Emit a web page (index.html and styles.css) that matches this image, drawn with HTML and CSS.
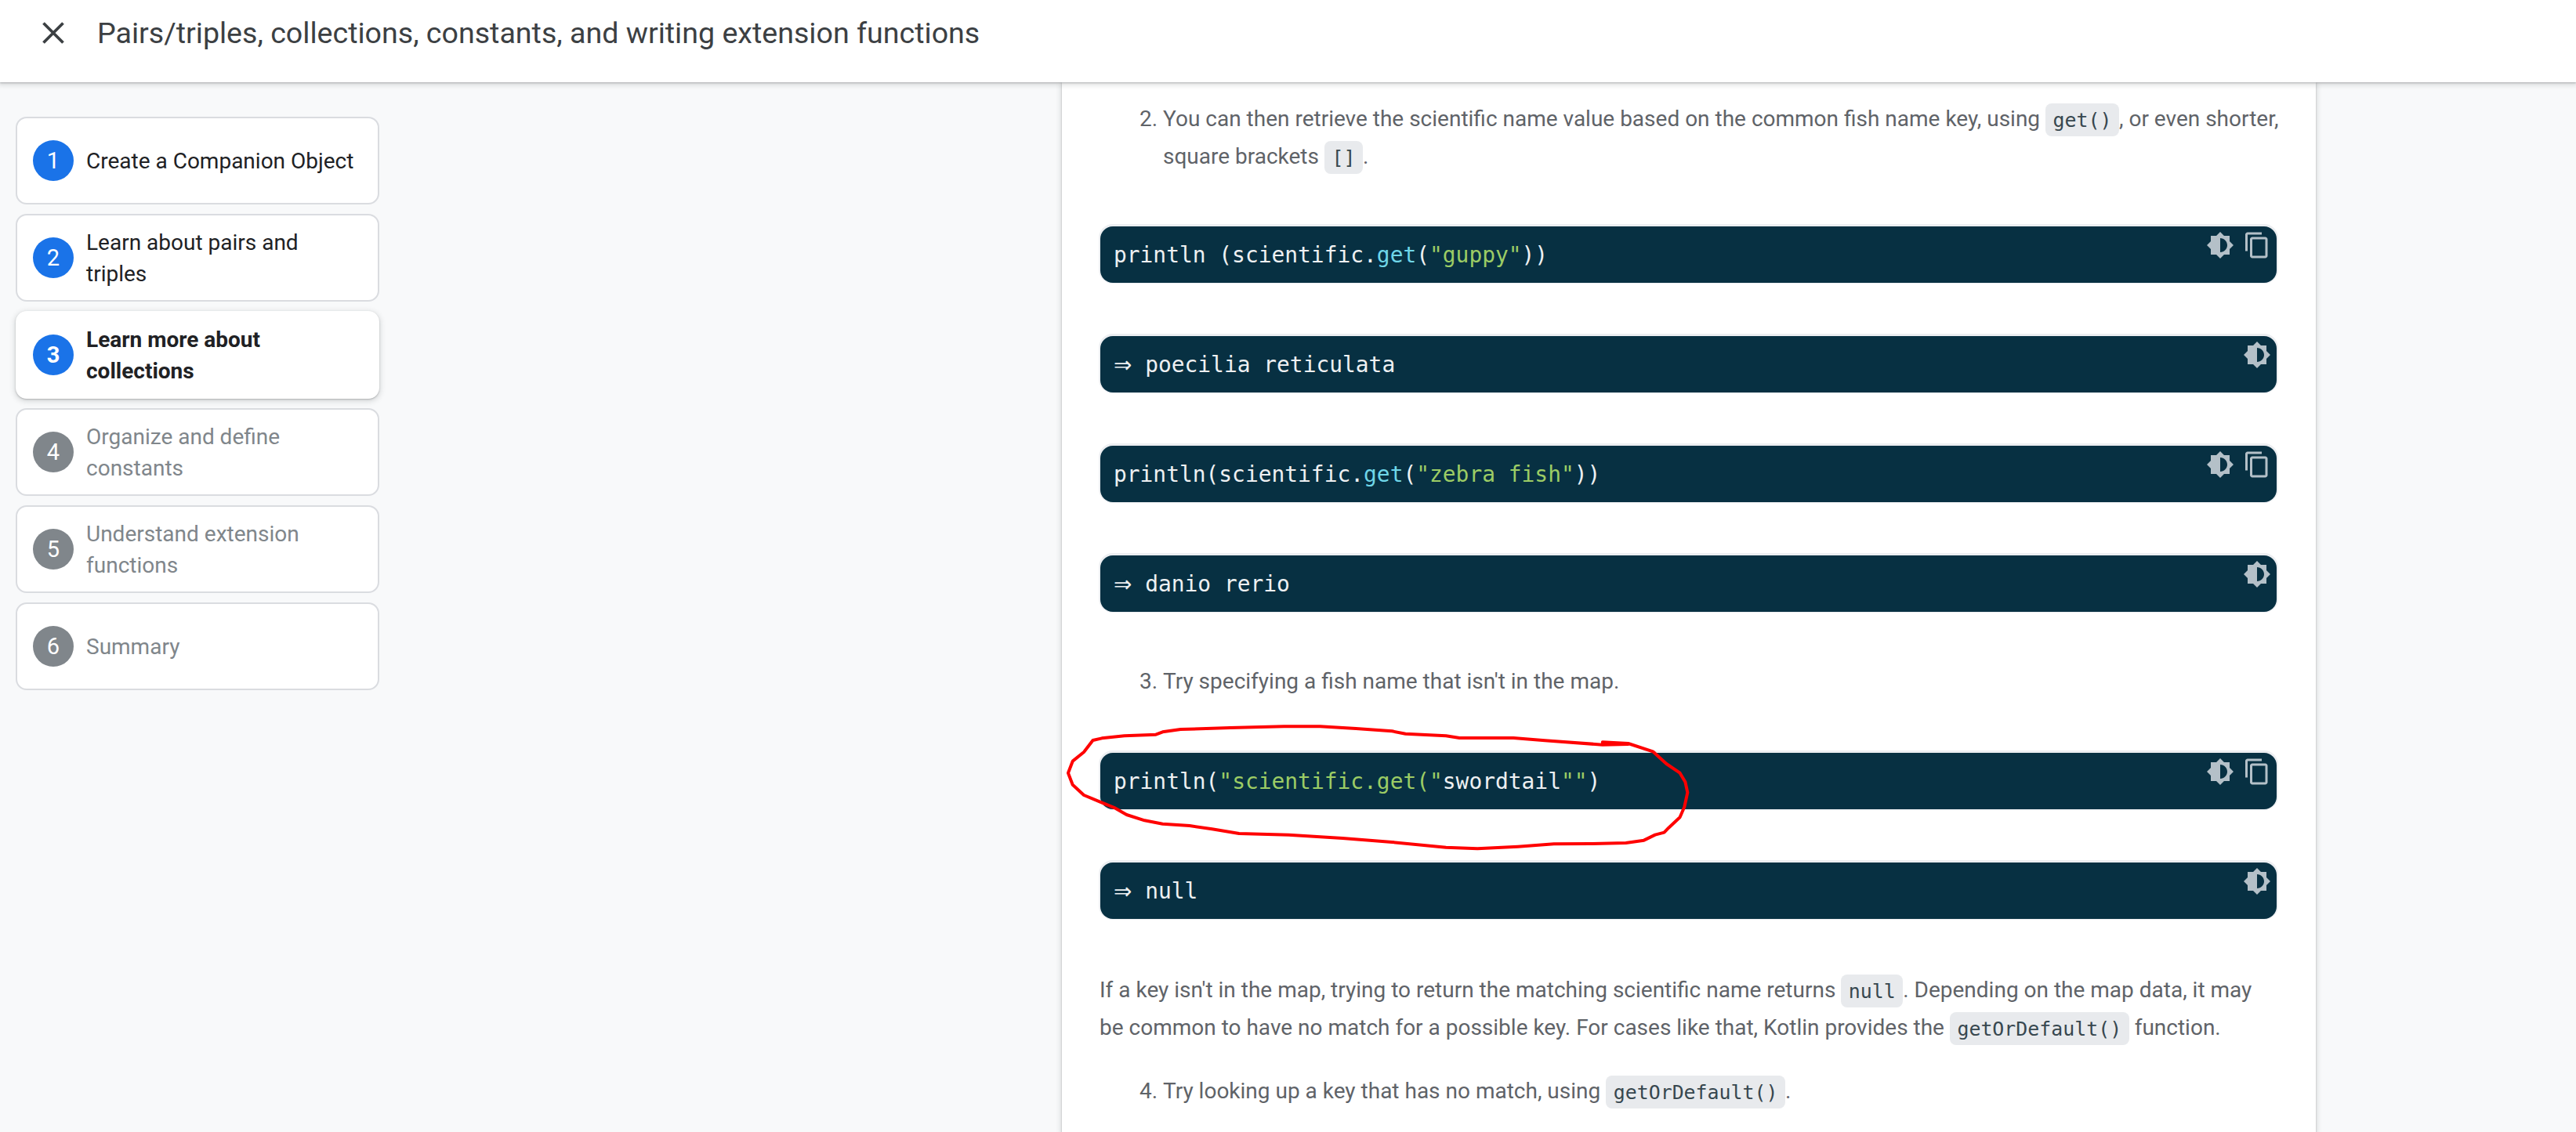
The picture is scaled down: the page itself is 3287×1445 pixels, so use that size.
FILE: index.html
```html
<!DOCTYPE html>
<html lang="en">
<head>
<meta charset="utf-8">
<title>Pairs/triples, collections, constants, and writing extension functions</title>
<link rel="stylesheet" href="styles.css">
</head>
<body>
<header class="topbar">
  <svg class="close" viewBox="0 0 28 28"><path d="M1.5 1.5 26.5 26.5M26.5 1.5 1.5 26.5"/></svg>
  <h1 class="title">Pairs/triples, collections, constants, and writing extension functions</h1>
</header>
<div class="layout">
  <nav class="steps">
    <a class="step"><span class="num">1</span><span class="label">Create a Companion Object</span></a>
    <a class="step"><span class="num">2</span><span class="label">Learn about pairs and triples</span></a>
    <a class="step active"><span class="num">3</span><span class="label">Learn more about collections</span></a>
    <a class="step todo"><span class="num">4</span><span class="label">Organize and define constants</span></a>
    <a class="step todo"><span class="num">5</span><span class="label">Understand extension functions</span></a>
    <a class="step todo"><span class="num">6</span><span class="label">Summary</span></a>
  </nav>
  <main class="article">
    <ol class="list" start="2">
      <li>You can then retrieve the scientific name value based on the common fish name key, using <code>get()</code>, or even shorter, square brackets <code>[]</code>.</li>
    </ol>
    <div class="code first">
      <pre>println (scientific.<span class="fn">get</span>(<span class="str">"guppy"</span>))</pre>
      <div class="tools">
        <svg class="icon" viewBox="0 0 24 24"><path d="M20 15.31 23.31 12 20 8.69V4h-4.69L12 .69 8.69 4H4v4.69L.69 12 4 15.31V20h4.69L12 23.31 15.31 20H20v-4.69zM12 18V6c3.31 0 6 2.69 6 6s-2.69 6-6 6z"/></svg>
        <svg class="icon" viewBox="0 0 24 24"><path d="M16 1H4c-1.1 0-2 .9-2 2v14h2V3h12V1zm3 4H8c-1.1 0-2 .9-2 2v14c0 1.1.9 2 2 2h11c1.1 0 2-.9 2-2V7c0-1.1-.9-2-2-2zm0 16H8V7h11v14z"/></svg>
      </div>
    </div>
    <div class="code">
      <pre><span class="arrow">⇒</span> poecilia reticulata</pre>
      <div class="tools">
        <svg class="icon" viewBox="0 0 24 24"><path d="M20 15.31 23.31 12 20 8.69V4h-4.69L12 .69 8.69 4H4v4.69L.69 12 4 15.31V20h4.69L12 23.31 15.31 20H20v-4.69zM12 18V6c3.31 0 6 2.69 6 6s-2.69 6-6 6z"/></svg>
      </div>
    </div>
    <div class="code">
      <pre>println(scientific.<span class="fn">get</span>(<span class="str">"zebra fish"</span>))</pre>
      <div class="tools">
        <svg class="icon" viewBox="0 0 24 24"><path d="M20 15.31 23.31 12 20 8.69V4h-4.69L12 .69 8.69 4H4v4.69L.69 12 4 15.31V20h4.69L12 23.31 15.31 20H20v-4.69zM12 18V6c3.31 0 6 2.69 6 6s-2.69 6-6 6z"/></svg>
        <svg class="icon" viewBox="0 0 24 24"><path d="M16 1H4c-1.1 0-2 .9-2 2v14h2V3h12V1zm3 4H8c-1.1 0-2 .9-2 2v14c0 1.1.9 2 2 2h11c1.1 0 2-.9 2-2V7c0-1.1-.9-2-2-2zm0 16H8V7h11v14z"/></svg>
      </div>
    </div>
    <div class="code">
      <pre><span class="arrow">⇒</span> danio rerio</pre>
      <div class="tools">
        <svg class="icon" viewBox="0 0 24 24"><path d="M20 15.31 23.31 12 20 8.69V4h-4.69L12 .69 8.69 4H4v4.69L.69 12 4 15.31V20h4.69L12 23.31 15.31 20H20v-4.69zM12 18V6c3.31 0 6 2.69 6 6s-2.69 6-6 6z"/></svg>
      </div>
    </div>
    <ol class="list mid" start="3">
      <li>Try specifying a fish name that isn't in the map.</li>
    </ol>
    <div class="code first">
      <pre>println(<span class="str">"scientific.get("</span>swordtail<span class="str">""</span>)</pre>
      <div class="tools">
        <svg class="icon" viewBox="0 0 24 24"><path d="M20 15.31 23.31 12 20 8.69V4h-4.69L12 .69 8.69 4H4v4.69L.69 12 4 15.31V20h4.69L12 23.31 15.31 20H20v-4.69zM12 18V6c3.31 0 6 2.69 6 6s-2.69 6-6 6z"/></svg>
        <svg class="icon" viewBox="0 0 24 24"><path d="M16 1H4c-1.1 0-2 .9-2 2v14h2V3h12V1zm3 4H8c-1.1 0-2 .9-2 2v14c0 1.1.9 2 2 2h11c1.1 0 2-.9 2-2V7c0-1.1-.9-2-2-2zm0 16H8V7h11v14z"/></svg>
      </div>
    </div>
    <div class="code">
      <pre><span class="arrow">⇒</span> null</pre>
      <div class="tools">
        <svg class="icon" viewBox="0 0 24 24"><path d="M20 15.31 23.31 12 20 8.69V4h-4.69L12 .69 8.69 4H4v4.69L.69 12 4 15.31V20h4.69L12 23.31 15.31 20H20v-4.69zM12 18V6c3.31 0 6 2.69 6 6s-2.69 6-6 6z"/></svg>
      </div>
    </div>
    <p class="para">If a key isn't in the map, trying to return the matching scientific name returns <code>null</code>. Depending on the map data, it may be common to have no match for a possible key. For cases like that, Kotlin provides the <code>getOrDefault()</code> function.</p>
    <ol class="list last" start="4">
      <li>Try looking up a key that has no match, using <code>getOrDefault()</code>.</li>
    </ol>
  </main>
</div>
<svg class="scribble" viewBox="0 0 1568 960" preserveAspectRatio="none"><path d="M1285 150 1228 152 1100 136 1030 126 910 126 880 118 790 110 760 100 680 90 600 82 520 82 400 87 290 93 250 103 235 113 165 118 115 127 95 135 75 180 50 215 40 260 50 305 75 345 110 370 145 395 170 420 210 442 250 455 310 462 360 475 420 492 530 497 650 510 760 525 880 545 950 550 1040 542 1120 532 1200 531 1280 528 1320 518 1345 497 1365 488 1375 470 1400 430 1410 390 1417 335 1412 295 1400 260 1370 225 1340 178 1285 147 1228 142"/></svg>
</body>
</html>
```
FILE: styles.css
```css
* { box-sizing: border-box; }
html, body { margin: 0; height: 1445px; overflow: hidden; }
body {
  background: #f8f9fa;
  font-family: Roboto, "Liberation Sans", sans-serif;
  position: relative;
}
.topbar {
  height: 105px;
  background: #fff;
  display: flex;
  align-items: center;
  padding: 0 0 22px 54px;
  box-shadow: 0 1px 2px rgba(60,64,67,.3), 0 2px 6px 2px rgba(60,64,67,.15);
  position: relative;
  z-index: 2;
}
.close { width: 28px; height: 28px; flex: none; }
.close path { fill: none; stroke: #3c4043; stroke-width: 3.8; }
.title {
  margin: 0 0 0 42px;
  font-size: 37.6px;
  font-weight: 400;
  color: #3c4043;
  white-space: nowrap;
}
.layout { display: flex; align-items: flex-start; }
.steps {
  width: 464px;
  margin-left: 20px;
  padding-top: 44px;
  display: flex;
  flex-direction: column;
  gap: 12px;
  flex: none;
}
.step {
  height: 112px;
  display: flex;
  align-items: center;
  gap: 16px;
  padding: 0 20px;
  background: #fff;
  border: 2px solid #dadce0;
  border-radius: 14px;
  color: #202124;
  font-size: 28px;
  line-height: 40px;
}
.label { padding-top: 1px; }
.num {
  width: 52px;
  height: 52px;
  flex: none;
  border-radius: 50%;
  background: #1a73e8;
  color: #fff;
  font-size: 29px;
  display: flex;
  align-items: center;
  justify-content: center;
}
.step.active {
  border-color: transparent;
  font-weight: 700;
  box-shadow: 0 1px 2px rgba(60,64,67,.3), 0 2px 6px 2px rgba(60,64,67,.15);
}
.step.todo { color: #80868b; }
.step.todo .num { background: #80868b; }
.article {
  width: 1600px;
  height: 1340px;
  margin-left: 871px;
  padding: 23px 50px 0 49px;
  background: #fff;
  flex: none;
  color: #5f6368;
  font-size: 28px;
  line-height: 48px;
  box-shadow: 0 1px 2px rgba(60,64,67,.3), 0 2px 6px 2px rgba(60,64,67,.15);
}
.list { margin: 0 -6px 0 0; padding-left: 80px; }
.list.mid { margin-top: 65px; }
.list.last { margin-top: 33px; }
.para { margin: 67px 0 0 -1px; }
code {
  font-family: "DejaVu Sans Mono", "Liberation Mono", monospace;
  font-size: 24.9px;
  line-height: 1;
  color: #37474f;
  background: #e8eaed;
  border-radius: 8px;
  padding: 6.5px 9.5px;
}
.code {
  position: relative;
  height: 72px;
  margin-top: 68px;
  background: #073042;
  border-radius: 16px;
  box-shadow: 0 -1px 0 2px #eceef1;
  display: flex;
  align-items: center;
  padding: 2px 17px 0;
}
.code.first { margin-top: 65px; }
.list.mid + .code { margin-top: 67px; }
.code pre {
  margin: 0;
  font-family: "DejaVu Sans Mono", "Liberation Mono", monospace;
  font-size: 27.9px;
  line-height: 40px;
  color: #eef0f2;
}
.arrow { font-family: "DejaVu Sans", sans-serif; }
.fn { color: #6fd6e8; }
.str { color: #9ccc65; }
.tools {
  position: absolute;
  top: 6px;
  right: 7px;
  display: flex;
  gap: 11px;
}
.icon { width: 36px; height: 36px; fill: #b4c0c8; }
.scribble {
  position: absolute;
  left: 1340px;
  top: 900px;
  width: 900px;
  height: 320px;
  z-index: 3;
}
.scribble path {
  fill: none;
  stroke: #f00;
  stroke-width: 4;
  stroke-linejoin: round;
  stroke-linecap: round;
  vector-effect: non-scaling-stroke;
}
```
